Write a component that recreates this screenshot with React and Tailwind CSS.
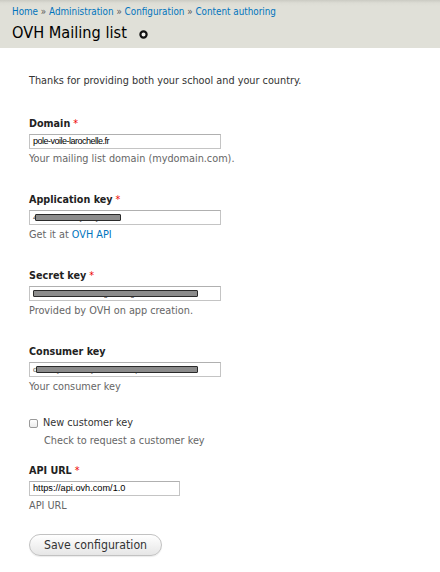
const font = { fontFamily: '"DejaVu Sans Condensed", "DejaVu Sans", sans-serif' };
const inputFont = { fontFamily: '"Liberation Sans", Arial, sans-serif' };

function Label({ children, required }) {
  return (
    <div className="text-[10.7px] leading-[14px] font-bold text-[#222]">
      {children}
      {required && <span className="ml-[3px] font-normal text-[#e00]">*</span>}
    </div>
  );
}

function Field({ width = 'w-[192px]', children }) {
  return (
    <div
      className={`relative mt-[3px] h-[15px] ${width} border border-[#c4c4c4] border-t-[#b0b0b0] bg-white pl-[3px] text-[8px] leading-[13px] text-black tracking-[-0.2px] overflow-hidden whitespace-nowrap`}
      style={inputFont}
    >
      {children}
    </div>
  );
}

function Redacted({ className }) {
  return <div className={`absolute rounded-[1px] border border-[#2a2a2a] bg-[#8c8c8c] ${className}`} />;
}

function Desc({ children, className = '' }) {
  return <div className={`mt-[4px] text-[10.8px] leading-[12px] text-[#666] ${className}`}>{children}</div>;
}

export default function App() {
  return (
    <div className="min-h-[572px] w-[440px] bg-white" style={font}>
      <div className="bg-[linear-gradient(to_bottom,#cbcbc3_0px,#dcdcd4_3px,#e0e0d8_6px)] px-[12px] pt-[5px] pb-[5px]">
        <div className="text-[9.8px] leading-[14px] text-[#0074bd]">
          <a>Home</a> <span className="text-[#555]">»</span> <a>Administration</a>{' '}
          <span className="text-[#555]">»</span> <a>Configuration</a>{' '}
          <span className="text-[#555]">»</span> <a>Content authoring</a>
        </div>
        <div className="mt-[4px] flex items-center text-[16.2px] leading-[20px] text-black">
          <span>OVH Mailing list</span>
          <svg className="ml-[12px] mt-[2px]" width="9" height="9" viewBox="0 0 9 9">
            <circle cx="4.5" cy="4.5" r="3.1" fill="#f2f2ee" stroke="#111" strokeWidth="2.2" />
          </svg>
        </div>
      </div>

      <div className="pl-[29px] pt-[26px]">
        <div className="text-[10.8px] leading-[14px] text-[#333]">
          Thanks for providing both your school and your country.
        </div>

        <div className="mt-[29px]">
          <Label required>Domain</Label>
          <Field>
            <span className="text-[9px] tracking-[-0.5px]">pole-voile-larochelle.fr</span>
          </Field>
          <Desc>Your mailing list domain (mydomain.com).</Desc>
        </div>

        <div className="mt-[28px]">
          <Label required>Application key</Label>
          <Field>
            <span className="text-[#333]">4xxmkvdhfthxyhxdy</span>
            <Redacted className="left-[5px] top-[2.5px] h-[7px] w-[86px]" />
          </Field>
          <Desc>
            Get it at <span className="text-[#0074bd]">OVH API</span>
          </Desc>
        </div>

        <div className="mt-[28px]">
          <Label required>Secret key</Label>
          <Field>
            <span className="text-[#555]">nhmxbchdhxmhmxrxgrxbxxbgrxvxmxrdhxmxnxh</span>
            <Redacted className="left-[3px] top-[3px] h-[6.5px] w-[165px]" />
          </Field>
          <Desc>Provided by OVH on app creation.</Desc>
        </div>

        <div className="mt-[28px]">
          <Label>Consumer key</Label>
          <Field>
            <span className="text-[#555]">dxxbxxyxhmxxdxyxrxxbxhhmxpxbxdxbxrnxo</span>
            <Redacted className="left-[6px] top-[2.5px] h-[7px] w-[162px]" />
          </Field>
          <Desc>Your consumer key</Desc>
        </div>

        <div className="mt-[23px] flex items-center text-[10.8px] leading-[14px] text-[#333]">
          <span className="mr-[5px] h-[9px] w-[9px] rounded-[2px] border border-[#9a9a9a] bg-[linear-gradient(to_bottom,#ffffff,#ececec)]" />
          <span>New customer key</span>
        </div>
        <Desc className="mt-[5px] pl-[15px]">Check to request a customer key</Desc>

        <div className="mt-[17px]">
          <Label required>API URL</Label>
          <Field width="w-[151px]">
            <span className="text-[9.2px] tracking-[0px]">https://api.ovh.com/1.0</span>
          </Field>
          <Desc>API URL</Desc>
        </div>

        <button
          type="button"
          className="mt-[22px] flex h-[22px] w-[133px] items-center justify-center rounded-full border border-[#c2c2c2] bg-[linear-gradient(to_bottom,#ffffff,#e6e6e6)] text-[12.2px] leading-[20px] text-[#333] shadow-[0_1px_1px_rgba(0,0,0,0.08)]"
          style={font}
        >
          Save configuration
        </button>
      </div>
    </div>
  );
}
